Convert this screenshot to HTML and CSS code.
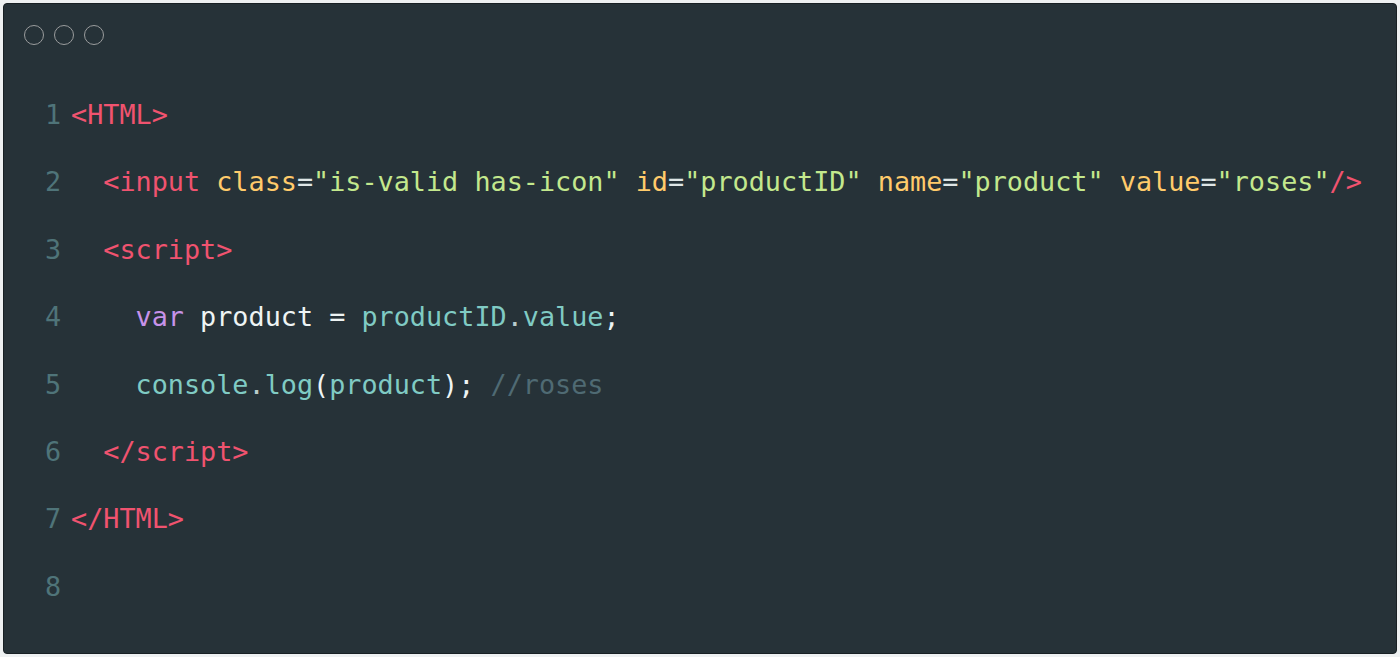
FILE: index.html
```html
<!DOCTYPE html>
<html>
<head>
<meta charset="utf-8">
<link rel="stylesheet" href="styles.css">
</head>
<body>
<div class="window">
  <div class="titlebar">
    <span class="dot"></span><span class="dot"></span><span class="dot"></span>
  </div>
  <div class="code">
    <div class="line"><span class="ln">1</span><span class="src"><span class="tag">&lt;HTML&gt;</span></span></div>
    <div class="line"><span class="ln">2</span><span class="src">  <span class="tag">&lt;input</span> <span class="attr">class</span><span class="eq">=</span><span class="str">"is-valid has-icon"</span> <span class="attr">id</span><span class="eq">=</span><span class="str">"productID"</span> <span class="attr">name</span><span class="eq">=</span><span class="str">"product"</span> <span class="attr">value</span><span class="eq">=</span><span class="str">"roses"</span><span class="tag">/&gt;</span></span></div>
    <div class="line"><span class="ln">3</span><span class="src">  <span class="tag">&lt;script&gt;</span></span></div>
    <div class="line"><span class="ln">4</span><span class="src">    <span class="kw">var</span> <span class="plain">product</span> <span class="plain">=</span> <span class="fn">productID</span><span class="dotc">.</span><span class="fn">value</span><span class="plain">;</span></span></div>
    <div class="line"><span class="ln">5</span><span class="src">    <span class="fn">console</span><span class="dotc">.</span><span class="fn">log</span><span class="plain">(</span><span class="fn">product</span><span class="plain">);</span> <span class="cmt">//roses</span></span></div>
    <div class="line"><span class="ln">6</span><span class="src">  <span class="tag">&lt;/script&gt;</span></span></div>
    <div class="line"><span class="ln">7</span><span class="src"><span class="tag">&lt;/HTML&gt;</span></span></div>
    <div class="line"><span class="ln">8</span><span class="src"></span></div>
  </div>
</div>
</body>
</html>
```

FILE: styles.css
```css
html, body {
  margin: 0;
  padding: 0;
  background: #eef1f2;
}

.window {
  margin: 3px;
  height: 651px;
  box-sizing: border-box;
  background: #263238;
  border: 1px solid #182024;
  border-radius: 4px;
  overflow: hidden;
}

.titlebar {
  display: flex;
  gap: 10px;
  padding: 21px 0 0 20px;
  height: 20px;
}

.dot {
  width: 20px;
  height: 20px;
  box-sizing: border-box;
  border: 1.6px solid #9a9c9d;
  border-radius: 50%;
}

.code {
  margin-top: 36px;
  font-family: "DejaVu Sans Mono", "Liberation Mono", monospace;
  font-size: 26.8px;
  line-height: 67.4px;
  color: #eeffff;
}

.line {
  display: flex;
  padding-left: 41px;
  white-space: pre;
}

.ln {
  width: 26px;
  flex: none;
  color: #4f7479;
}

.src {
  white-space: pre;
}

.tag { color: #f0536f; }
.attr { color: #ffcb6b; }
.eq { color: #dfe6e6; }
.str { color: #c3e88d; }
.kw { color: #c792ea; }
.plain { color: #eef4f4; }
.fn { color: #80cbc4; }
.dotc { color: #b9cccb; }
.cmt { color: #4f6a73; }
```
